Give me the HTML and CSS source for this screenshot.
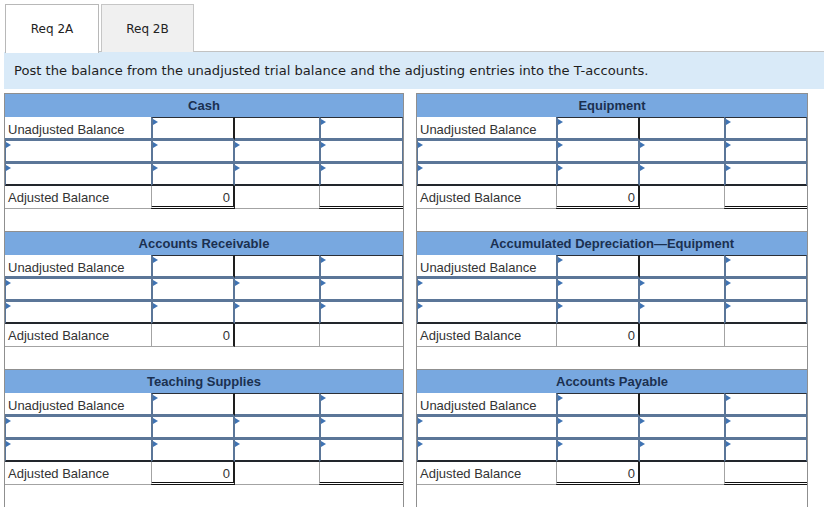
FILE: index.html
```html
<!DOCTYPE html>
<html>
<head>
<meta charset="utf-8">
<link rel="stylesheet" href="styles.css">
</head>
<body>
<div class="tabs">
  <div class="tab active">Req 2A</div>
  <div class="tab">Req 2B</div>
</div>
<div class="banner">Post the balance from the unadjusted trial balance and the adjusting entries into the T-accounts.</div>
<div class="accounts">
  <div class="col left">
    <div class="acct">
      <div class="hd">Cash</div>
      <div class="c lbl r1">Unadjusted Balance</div><div class="c in r1 c2 tri"></div><div class="c in r1 c3"></div><div class="c in r1 c4 tri"></div>
      <div class="c in lbl r2 tri"></div><div class="c in r2 c2 tri"></div><div class="c in r2 c3 tri"></div><div class="c in r2 c4 tri"></div>
      <div class="c in lbl r3 tri"></div><div class="c in r3 c2 tri"></div><div class="c in r3 c3 tri"></div><div class="c in r3 c4 tri"></div>
      <div class="c lbl r4">Adjusted Balance</div><div class="c r4 c2 dbl">0</div><div class="c r4 c3"></div><div class="c r4 c4 dbl"></div>
      <div class="sp"></div>
    </div>
    <div class="acct">
      <div class="hd">Accounts Receivable</div>
      <div class="c lbl r1">Unadjusted Balance</div><div class="c in r1 c2 tri"></div><div class="c in r1 c3"></div><div class="c in r1 c4 tri"></div>
      <div class="c in lbl r2 tri"></div><div class="c in r2 c2 tri"></div><div class="c in r2 c3 tri"></div><div class="c in r2 c4 tri"></div>
      <div class="c in lbl r3 tri"></div><div class="c in r3 c2 tri"></div><div class="c in r3 c3 tri"></div><div class="c in r3 c4 tri"></div>
      <div class="c lbl r4">Adjusted Balance</div><div class="c r4 c2">0</div><div class="c r4 c3"></div><div class="c r4 c4"></div>
      <div class="sp"></div>
    </div>
    <div class="acct">
      <div class="hd">Teaching Supplies</div>
      <div class="c lbl r1">Unadjusted Balance</div><div class="c in r1 c2 tri"></div><div class="c in r1 c3"></div><div class="c in r1 c4 tri"></div>
      <div class="c in lbl r2 tri"></div><div class="c in r2 c2 tri"></div><div class="c in r2 c3 tri"></div><div class="c in r2 c4 tri"></div>
      <div class="c in lbl r3 tri"></div><div class="c in r3 c2 tri"></div><div class="c in r3 c3 tri"></div><div class="c in r3 c4 tri"></div>
      <div class="c lbl r4">Adjusted Balance</div><div class="c r4 c2 dbl">0</div><div class="c r4 c3"></div><div class="c r4 c4 dbl"></div>
      <div class="sp"></div>
    </div>
  </div>
  <div class="col right">
    <div class="acct">
      <div class="hd">Equipment</div>
      <div class="c lbl r1">Unadjusted Balance</div><div class="c in r1 c2 tri"></div><div class="c in r1 c3"></div><div class="c in r1 c4 tri"></div>
      <div class="c in lbl r2 tri"></div><div class="c in r2 c2 tri"></div><div class="c in r2 c3 tri"></div><div class="c in r2 c4 tri"></div>
      <div class="c in lbl r3 tri"></div><div class="c in r3 c2 tri"></div><div class="c in r3 c3 tri"></div><div class="c in r3 c4 tri"></div>
      <div class="c lbl r4">Adjusted Balance</div><div class="c r4 c2 dbl">0</div><div class="c r4 c3"></div><div class="c r4 c4 dbl"></div>
      <div class="sp"></div>
    </div>
    <div class="acct">
      <div class="hd">Accumulated Depreciation—Equipment</div>
      <div class="c lbl r1">Unadjusted Balance</div><div class="c in r1 c2 tri"></div><div class="c in r1 c3"></div><div class="c in r1 c4 tri"></div>
      <div class="c in lbl r2 tri"></div><div class="c in r2 c2 tri"></div><div class="c in r2 c3 tri"></div><div class="c in r2 c4 tri"></div>
      <div class="c in lbl r3 tri"></div><div class="c in r3 c2 tri"></div><div class="c in r3 c3 tri"></div><div class="c in r3 c4 tri"></div>
      <div class="c lbl r4">Adjusted Balance</div><div class="c r4 c2">0</div><div class="c r4 c3"></div><div class="c r4 c4"></div>
      <div class="sp"></div>
    </div>
    <div class="acct">
      <div class="hd">Accounts Payable</div>
      <div class="c lbl r1">Unadjusted Balance</div><div class="c in r1 c2 tri"></div><div class="c in r1 c3"></div><div class="c in r1 c4 tri"></div>
      <div class="c in lbl r2 tri"></div><div class="c in r2 c2 tri"></div><div class="c in r2 c3 tri"></div><div class="c in r2 c4 tri"></div>
      <div class="c in lbl r3 tri"></div><div class="c in r3 c2 tri"></div><div class="c in r3 c3 tri"></div><div class="c in r3 c4 tri"></div>
      <div class="c lbl r4">Adjusted Balance</div><div class="c r4 c2 dbl">0</div><div class="c r4 c3"></div><div class="c r4 c4 dbl"></div>
      <div class="sp"></div>
    </div>
  </div>
</div>
</body>
</html>
```
FILE: styles.css
```css
* { box-sizing: border-box; }
html, body { margin: 0; padding: 0; background: #fff; }
body { font-family: "DejaVu Sans", Verdana, sans-serif; color: #222; overflow: hidden; }

.tabs {
  display: flex;
  gap: 2px;
  margin: 4px 0 0 5px;
  height: 48px;
  border-bottom: 1px solid #c2c2c2;
}
.tab {
  width: 93px;
  height: 48px;
  border: 1px solid #c6c6c6;
  border-bottom: none;
  background: #f0f0f0;
  font-size: 12px;
  line-height: 48px;
  text-align: center;
  color: #222;
}
.tab.active {
  width: 94px;
  background: #fff;
  border-color: #b8b8b8;
  margin-bottom: -1px;
  height: 49px;
}
.banner {
  margin-left: 4px;
  height: 37px;
  background: #d9eaf8;
  padding-left: 10px;
  font-size: 13.1px;
  line-height: 38px;
  color: #1e1e1e;
}

.accounts {
  display: flex;
  gap: 12px;
  margin: 4px 0 0 4px;
}
.col { display: flex; flex-direction: column; }

.acct {
  display: grid;
  grid-template-columns: 146px 84px 84px 84px;
  grid-template-rows: 24px 23px 23px 23px 23px 22px;
  border-left: 1px solid #8f8f8f;
  border-right: 1px solid #8f8f8f;
  font-family: "Liberation Sans", Arial, sans-serif;
}
.right .acct { grid-template-columns: 139px 84px 84px 83px; }

.hd {
  grid-column: 1 / -1;
  background: #78a8e0;
  border-top: 1px solid #8f8f8f;
  text-align: center;
  font-weight: bold;
  font-size: 13px;
  line-height: 24px;
  color: #1b3050;
}
.c { position: relative; font-size: 13px; color: #333; }
.lbl { padding-left: 3px; padding-top: 2px; line-height: 21px; }
.tri::before {
  content: "";
  position: absolute;
  left: 0;
  top: 1px;
  border-left: 5px solid #3f73b3;
  border-top: 3px solid transparent;
  border-bottom: 3px solid transparent;
}

.r1.lbl { border-bottom: 2px solid #5b7698; }
.r1.in { border-top: 1px solid #2b2f36; border-bottom: 2px solid #5b7698; }
.r2 { border-top: 1px solid #5b7698; border-bottom: 2px solid #5b7698; }
.r3 { border-top: 1px solid #5b7698; border-bottom: 2px solid #22262c; }
.lbl.r2, .lbl.r3 { border-left: 1px solid #5b7698; padding: 0; }
.in.c2 { border-left: 2px solid #5b7698; border-right: 2px solid #5b7698; }
.r1.in.c2 { border-right: 2px solid #1e1e1e; }
.in.c4 { border-left: 2px solid #5b7698; border-right: 1px solid #5b7698; }

.r4 { border-bottom: 1px solid #a3a3a3; line-height: 22px; padding-top: 2px; }
.r4.lbl { line-height: 20px; }
.r4.c2 {
  border-left: 1px solid #a3a3a3;
  border-right: 2px solid #1e1e1e;
  text-align: right;
  padding-right: 3px;
  line-height: 20px;
}
.r4.c4 { border-left: 1px solid #a3a3a3; }
.r4.dbl { border-bottom: 3px double #111; }
.sp { grid-column: 1 / -1; }
```
